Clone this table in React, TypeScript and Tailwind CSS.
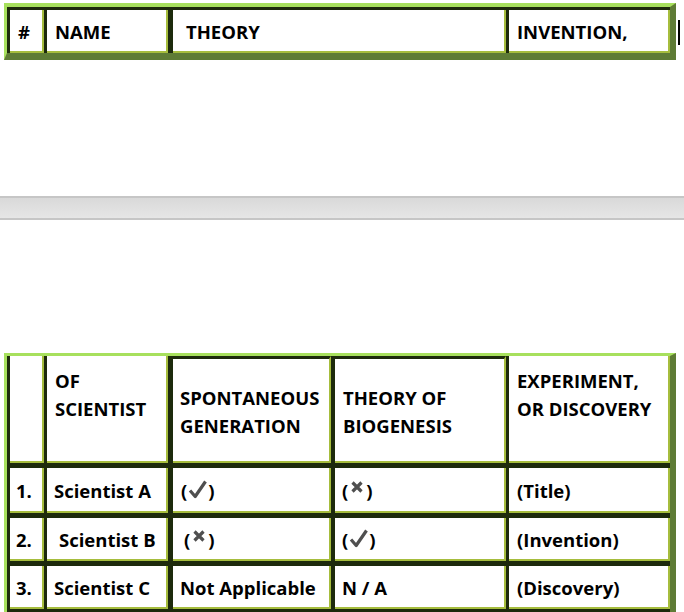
import React from "react";

const cell =
  "bg-white border-r-2 border-b-2 border-r-[#a6bd3d] border-b-[#a6bd3d] flex items-center shrink-0";

function Check() {
  return (
    <svg width="19" height="19" viewBox="0 0 19 19" className="mx-[1px] mt-[-4px] shrink-0">
      <path d="M2 10.5 L7.2 16.5 L17.5 1.5" fill="none" stroke="#4f4f4f" strokeWidth="3.2" strokeLinejoin="round" />
    </svg>
  );
}

function Cross() {
  return (
    <svg width="12" height="12" viewBox="0 0 12 12" className="mx-[3px] mt-[-9px] shrink-0">
      <path d="M1.5 1.5 L10.5 10.5 M10.5 1.5 L1.5 10.5" fill="none" stroke="#4f4f4f" strokeWidth="3.2" />
    </svg>
  );
}

function Row({ n, name, namePad, c3, c4, c5, h }: { n: string; name: string; namePad: string; c3: React.ReactNode; c4: React.ReactNode; c5: string; h: string }) {
  return (
    <div className={`flex ${h}`}>
      <div className={`${cell} w-[34px] pl-[6px] pt-[3px]`}>{n}</div>
      <div className={`${cell} w-[121px] ml-[3px] pt-[3px] ${namePad}`}>{name}</div>
      <div className={`${cell} w-[158px] ml-[5px] pl-[7px] pt-[3px]`}>{c3}</div>
      <div className={`${cell} w-[171px] ml-[4px] pl-[7px] pt-[3px]`}>{c4}</div>
      <div className={`${cell} w-[161px] ml-[3px] pl-[8px] pt-[3px]`}>{c5}</div>
    </div>
  );
}

export default function App() {
  return (
    <div className="w-[684px] h-[612px] overflow-hidden bg-white font-['Open_Sans',sans-serif] text-[18.5px] font-bold text-black leading-[28px]">
      {/* top table */}
      <div className="pt-[3px] pl-[4px] flex items-start">
        <div className="w-[672px] border-t-[4px] border-l-[3px] border-r-[6px] border-b-[7px] border-t-[#a7e05d] border-l-[#a7e05d] border-r-[#5e7b35] border-b-[#5e7b35] bg-[#1d2a0c] pt-[3px] pl-[3px] flex">
          <div className={`${cell} h-[43px] w-[34px] pl-[8px] pt-[2px]`}>#</div>
          <div className={`${cell} h-[43px] w-[121px] ml-[3px] pl-[8px] pt-[2px]`}>NAME</div>
          <div className={`${cell} h-[43px] w-[333px] ml-[5px] pl-[13px] pt-[2px]`}>THEORY</div>
          <div className={`${cell} h-[43px] w-[161px] ml-[3px] pl-[8px] pt-[2px]`}>INVENTION,</div>
        </div>
        <div className="ml-[2px] mt-[17px] w-[2px] h-[25px] bg-black" />
      </div>

      {/* page separator */}
      <div className="mt-[136px] h-[24px] border-y-2 border-[#c6c6c6] bg-linear-to-b from-[#d9d9d9] to-[#e6e6e6]" />

      {/* bottom table */}
      <div className="mt-[133px] ml-[4px] w-[672px] border-t-[3px] border-l-[3px] border-r-[6px] border-t-[#a7e05d] border-l-[#a7e05d] border-r-[#5e7b35] bg-[#1d2a0c] pl-[3px] pb-[4px] flex flex-col gap-[5px]">
        <div className="flex h-[107px]">
          <div className={`${cell} w-[34px]`} />
          <div className="bg-white border-r-2 border-b-2 border-r-[#a6bd3d] border-b-[#a6bd3d] shrink-0 w-[121px] ml-[3px] pl-[8px] pt-[11px]">
            OF<br />SCIENTIST
          </div>
          <div className={`${cell} w-[158px] ml-[5px] pl-[7px] pt-[3px] border-t-[3px] border-t-[#1d2a0c]`}>
            <div>SPONTANEOUS<br />GENERATION</div>
          </div>
          <div className={`${cell} w-[171px] ml-[4px] pl-[8px] pt-[3px] border-t-[3px] border-t-[#1d2a0c]`}>
            <div>THEORY OF<br />BIOGENESIS</div>
          </div>
          <div className="bg-white border-r-2 border-b-2 border-r-[#a6bd3d] border-b-[#a6bd3d] shrink-0 w-[161px] ml-[3px] pl-[8px] pt-[11px]">
            EXPERIMENT,<br />OR DISCOVERY
          </div>
        </div>
        <Row
          h="h-[45px]"
          n="1."
          name="Scientist A"
          namePad="pl-[7px]"
          c3={<span className="flex items-center pl-[1px]">(<Check />)</span>}
          c4={<span className="flex items-center">(<Cross />)</span>}
          c5="(Title)"
        />
        <Row
          h="h-[43px]"
          n="2."
          name="Scientist B"
          namePad="pl-[12px]"
          c3={<span className="flex items-center pl-[4px]">(<Cross />)</span>}
          c4={<span className="flex items-center">(<Check />)</span>}
          c5="(Invention)"
        />
        <Row
          h="h-[43px]"
          n="3."
          name="Scientist C"
          namePad="pl-[7px]"
          c3="Not Applicable"
          c4="N / A"
          c5="(Discovery)"
        />
      </div>
    </div>
  );
}
